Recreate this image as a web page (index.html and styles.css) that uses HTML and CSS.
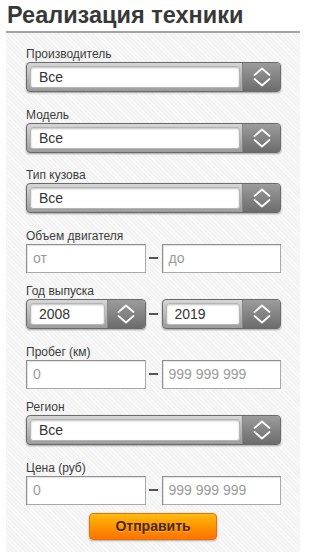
FILE: index.html
```html
<!DOCTYPE html>
<html lang="ru">
<head>
<meta charset="utf-8">
<link rel="stylesheet" href="styles.css">
</head>
<body>
<div class="widget">
  <h1 class="title">Реализация техники</h1>
  <form class="panel">
    <div class="field field--select">
      <div class="label">Производитель</div>
      <div class="select">
        <div class="select-value">Все</div>
        <div class="select-btn"><svg width="18" height="22" viewBox="0 0 18 22"><path d="M1.5 9 L9 2.5 L16.5 9 M1.5 13 L9 19.5 L16.5 13" fill="none" stroke="#fff" stroke-width="1.7" stroke-linecap="round" stroke-linejoin="round"/></svg></div>
      </div>
    </div>
    <div class="field field--select">
      <div class="label">Модель</div>
      <div class="select">
        <div class="select-value">Все</div>
        <div class="select-btn"><svg width="18" height="22" viewBox="0 0 18 22"><path d="M1.5 9 L9 2.5 L16.5 9 M1.5 13 L9 19.5 L16.5 13" fill="none" stroke="#fff" stroke-width="1.7" stroke-linecap="round" stroke-linejoin="round"/></svg></div>
      </div>
    </div>
    <div class="field field--select">
      <div class="label">Тип кузова</div>
      <div class="select">
        <div class="select-value">Все</div>
        <div class="select-btn"><svg width="18" height="22" viewBox="0 0 18 22"><path d="M1.5 9 L9 2.5 L16.5 9 M1.5 13 L9 19.5 L16.5 13" fill="none" stroke="#fff" stroke-width="1.7" stroke-linecap="round" stroke-linejoin="round"/></svg></div>
      </div>
    </div>
    <div class="field field--input">
      <div class="label">Объем двигателя</div>
      <div class="range">
        <div class="text-input">от</div>
        <span class="dash"></span>
        <div class="text-input">до</div>
      </div>
    </div>
    <div class="field field--select">
      <div class="label">Год выпуска</div>
      <div class="range">
        <div class="select">
          <div class="select-value">2008</div>
          <div class="select-btn"><svg width="18" height="22" viewBox="0 0 18 22"><path d="M1.5 9 L9 2.5 L16.5 9 M1.5 13 L9 19.5 L16.5 13" fill="none" stroke="#fff" stroke-width="1.7" stroke-linecap="round" stroke-linejoin="round"/></svg></div>
        </div>
        <span class="dash"></span>
        <div class="select">
          <div class="select-value">2019</div>
          <div class="select-btn"><svg width="18" height="22" viewBox="0 0 18 22"><path d="M1.5 9 L9 2.5 L16.5 9 M1.5 13 L9 19.5 L16.5 13" fill="none" stroke="#fff" stroke-width="1.7" stroke-linecap="round" stroke-linejoin="round"/></svg></div>
        </div>
      </div>
    </div>
    <div class="field field--input">
      <div class="label">Пробег (км)</div>
      <div class="range">
        <div class="text-input">0</div>
        <span class="dash"></span>
        <div class="text-input">999 999 999</div>
      </div>
    </div>
    <div class="field field--select">
      <div class="label">Регион</div>
      <div class="select">
        <div class="select-value">Все</div>
        <div class="select-btn"><svg width="18" height="22" viewBox="0 0 18 22"><path d="M1.5 9 L9 2.5 L16.5 9 M1.5 13 L9 19.5 L16.5 13" fill="none" stroke="#fff" stroke-width="1.7" stroke-linecap="round" stroke-linejoin="round"/></svg></div>
      </div>
    </div>
    <div class="field field--last">
      <div class="label">Цена (руб)</div>
      <div class="range">
        <div class="text-input">0</div>
        <span class="dash"></span>
        <div class="text-input">999 999 999</div>
      </div>
    </div>
    <div class="actions">
      <button type="button" class="submit">Отправить</button>
    </div>
  </form>
</div>
</body>
</html>
```

FILE: styles.css
```css
html, body {
  margin: 0;
  padding: 0;
  background: #fff;
}

body {
  font-family: "Liberation Sans", Arial, sans-serif;
  color: #333;
}

.widget {
  width: 294px;
  margin-left: 6px;
}

.title {
  margin: 0;
  padding: 2px 0 2px 1px;
  font-size: 23.5px;
  line-height: 27px;
  font-weight: bold;
  color: #383838;
  border-bottom: 2px solid #a3a3a3;
}

.panel {
  margin: 0;
  padding: 14px 19px 12px 20px;
  background-color: #f3f3f3;
  background-image: repeating-linear-gradient(45deg, rgba(255,255,255,0.55) 0 1px, rgba(255,255,255,0) 1px 3px);
}

.field--select {
  margin-bottom: 15.5px;
}

.field--input {
  margin-bottom: 11.5px;
}

.field--last {
  margin-bottom: 8px;
}

.label {
  font-size: 12px;
  line-height: 14px;
  color: #3c3c3c;
  margin-bottom: 1px;
}

.select {
  box-sizing: border-box;
  display: flex;
  height: 30px;
  border: 1px solid #6a6a6a;
  border-radius: 4px;
  background: linear-gradient(#d6d6d6, #9c9c9c);
  box-shadow: 0 1px 2px rgba(0,0,0,0.35);
  overflow: hidden;
}

.select-value {
  flex: 1;
  margin: 3px 0 3px 3px;
  padding-left: 8px;
  background: #fff;
  border-radius: 3px;
  box-shadow: inset 0 1px 2px rgba(0,0,0,0.25);
  border: 1px solid #b5b5b5;
  font-size: 14px;
  line-height: 20px;
  color: #333;
}

.select-btn {
  width: 37px;
  display: flex;
  align-items: center;
  justify-content: center;
  margin-left: 2px;
  background: linear-gradient(#9c9c9c, #6c6c6c);
  border-left: 1px solid #858585;
}

.range {
  display: grid;
  grid-template-columns: 1fr 16px 1fr;
  align-items: center;
}

.dash {
  display: block;
  width: 9px;
  height: 2px;
  margin-left: 3px;
  background: #555;
}

.text-input {
  box-sizing: border-box;
  height: 29px;
  border: 1px solid #a9a9a9;
  border-top-color: #8f8f8f;
  border-left-color: #8f8f8f;
  background: #fff;
  box-shadow: inset 1px 1px 1px rgba(0,0,0,0.12);
  padding-left: 6px;
  font-size: 14px;
  line-height: 27px;
  color: #9a9a9a;
}

.actions {
  display: flex;
  justify-content: center;
  padding-right: 1px;
}

.submit {
  box-sizing: border-box;
  width: 128px;
  height: 27px;
  padding: 0;
  border: 1px solid #e87000;
  border-radius: 4px;
  background: linear-gradient(#ffbb10, #ff9500 50%, #ff7200);
  box-shadow: 0 1px 2px rgba(0,0,0,0.3);
  font-family: "Liberation Sans", Arial, sans-serif;
  font-size: 14px;
  font-weight: bold;
  color: #4a2508;
  text-shadow: 0 1px 0 rgba(255,220,120,0.5);
  cursor: pointer;
}
```
